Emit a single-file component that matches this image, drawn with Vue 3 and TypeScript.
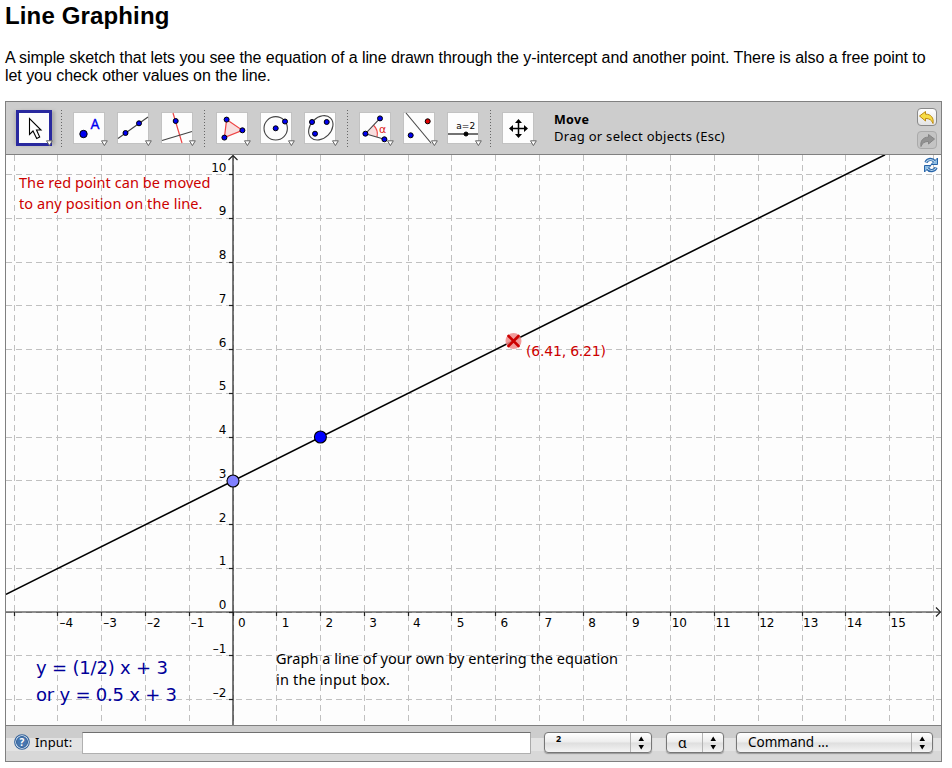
<script setup lang="ts">
interface Dot { x: number; y: number; r?: number; c?: string }
interface Tool { name: string; dots: Dot[]; selected?: boolean }

const groups: Tool[][] = [
  [{ name: 'move', dots: [], selected: true }],
  [
    { name: 'point', dots: [{ x: 10.5, y: 22, r: 3.7 }] },
    { name: 'line', dots: [{ x: 8.5, y: 21 }, { x: 22, y: 11.3 }] },
    { name: 'perpendicular', dots: [{ x: 14.7, y: 9 }] },
  ],
  [
    { name: 'polygon', dots: [{ x: 10.6, y: 7.6 }, { x: 26.4, y: 18.3 }, { x: 8.4, y: 25.6 }] },
    { name: 'circle', dots: [{ x: 15.7, y: 16.3 }, { x: 25, y: 9.5 }] },
    { name: 'ellipse', dots: [{ x: 8, y: 10 }, { x: 22.7, y: 10 }, { x: 11, y: 21.7 }] },
  ],
  [
    { name: 'angle', dots: [{ x: 6.4, y: 21.7 }, { x: 21, y: 6.4 }, { x: 25.4, y: 27.3 }] },
    { name: 'reflect', dots: [{ x: 7.7, y: 23.3 }, { x: 24.7, y: 9.3, c: '#e00000' }] },
    { name: 'slider', dots: [{ x: 19, y: 22, r: 2, c: '#000' }] },
  ],
  [{ name: 'pan', dots: [] }],
]

const ox = 233
const oy = 612.2
const unit = 43.77
const px = (v: number): number => ox + v * unit
const py = (v: number): number => oy - v * unit
const crisp = (v: number): number => Math.floor(v) + 0.5
const range = (a: number, b: number): number[] => Array.from({ length: b - a + 1 }, (_, i) => a + i)
const xs = range(-5, 16)
const ys = range(-2, 10)
const xLabels = range(-4, 15)
const label = (v: number): string => (v < 0 ? '–' + -v : String(v))
const labelX = (v: number): number => {
  if (v < 0) return px(v) + 1.5
  return v > 9 ? px(v) + 1 : px(v) + 5
}
</script>

<template>
  <main class="page">
    <h1>Line Graphing</h1>
    <p class="intro">
      <span class="l1">A simple sketch that lets you see the equation of a line drawn through the y-intercept and another point. There is also a free point to</span><br>
      <span class="l2">let you check other values on the line.</span>
    </p>

    <section class="applet">
      <header class="toolbar">
        <div v-for="(group, gi) in groups" :key="gi" class="group">
          <div v-for="tool in group" :key="tool.name" class="tool" :class="{ selected: tool.selected }">
            <svg class="icon" width="32" height="32" viewBox="0 0 32 32">
              <path v-if="tool.name === 'move'" d="M11.5 6.5V22.5L15 19L18.7 26.5L21.7 25L18.5 18H23Z" fill="#fff" stroke="#000" stroke-width="1.1" />
              <text v-if="tool.name === 'point'" x="17.6" y="17" class="letter">A</text>
              <path v-if="tool.name === 'line'" d="M1 26.5L31 5" class="ink" />
              <template v-if="tool.name === 'perpendicular'">
                <path d="M12 1L21 31" class="red" />
                <path d="M1 28.5L31 19.5" class="ink" />
              </template>
              <path v-if="tool.name === 'polygon'" d="M10.6 7.6L26.4 18.3L8.4 25.6Z" class="red tint" />
              <circle v-if="tool.name === 'circle'" cx="15.7" cy="16.3" r="11.7" class="ink" />
              <ellipse v-if="tool.name === 'ellipse'" cx="16.8" cy="15.8" rx="13.8" ry="10.3" transform="rotate(-45 16.8 15.8)" class="ink" />
              <template v-if="tool.name === 'angle'">
                <path d="M6.4 21.7L14.5 13.2A12 12 0 0 1 18 24.8Z" class="tint" />
                <path d="M14.5 13.2A12 12 0 0 1 18 24.8" class="red" />
                <path d="M21 6.4L6.4 21.7L25.4 27.3" class="ink" />
                <text x="20" y="20.5" class="alpha">α</text>
              </template>
              <path v-if="tool.name === 'reflect'" d="M3 1L28 31" class="ink" />
              <template v-if="tool.name === 'slider'">
                <path d="M1 22H31" stroke="#000" stroke-width="1.1" />
                <text x="9.2" y="17.2" textLength="19" class="tiny">a = 2</text>
              </template>
              <g v-if="tool.name === 'pan'">
                <path d="M16.5 9V24M9 16.5H24" stroke="#000" stroke-width="1.5" />
                <path d="M16.5 7L20 11H13ZM16.5 26L20 22H13ZM7 16.5L11 13V20ZM26 16.5L22 13V20Z" />
              </g>
              <circle v-for="(d, di) in tool.dots" :key="di" :cx="d.x" :cy="d.y" :r="d.r ?? 2.5" :fill="d.c ?? '#0000f0'" stroke="#000" stroke-width="1" />
              <path d="M28.5 28.8H34.3L31.4 33.6Z" fill="#fff" stroke="#666" stroke-width="1" />
            </svg>
          </div>
        </div>
        <div class="help">
          <strong>Move</strong>
          <span>Drag or select objects (Esc)</span>
        </div>
        <div class="history">
          <button class="hbtn">
            <svg width="18" height="17" viewBox="0 0 18 17"><path d="M1.5 7L7.5 2.5V5.2C13 5 16 9 15 14.5C13.7 11 11.5 9.5 7.5 9.4V12Z" fill="#f7dc45" stroke="#bd8a13" /></svg>
          </button>
          <button class="hbtn off">
            <svg width="18" height="17" viewBox="0 0 18 17"><path d="M16.5 7L10.5 2.5V5.2C5 5 2 9 3 14.5C4.3 11 6.5 9.5 10.5 9.4V12Z" fill="#929292" stroke="#858585" /></svg>
          </button>
        </div>
      </header>

      <svg class="graph" width="935" height="570" viewBox="6 155 935 570">
        <g class="grid">
          <line v-for="v in xs" :key="'x' + v" :x1="crisp(px(v))" :x2="crisp(px(v))" y1="155" y2="725" />
          <line v-for="v in ys" :key="'y' + v" x1="6" x2="941" :y1="crisp(py(v))" :y2="crisp(py(v))" />
        </g>
        <g class="axes">
          <path d="M6 612H940M233 725V156" />
          <path d="M228.5 160L233 155.5L237.5 160M936 607.5L940.5 612L936 616.5" fill="none" />
          <line v-for="v in xs.slice(0, -1)" :key="'tx' + v" :x1="crisp(px(v))" :x2="crisp(px(v))" y1="612" y2="616" />
          <line v-for="v in ys" :key="'ty' + v" x1="229" x2="233" :y1="crisp(py(v))" :y2="crisp(py(v))" />
        </g>
        <g class="nums">
          <text v-for="v in xLabels" :key="'lx' + v" :x="labelX(v)" y="627">{{ label(v) }}</text>
          <text v-for="v in ys" :key="'ly' + v" x="226.5" :y="py(v) - 3" text-anchor="end">{{ label(v) }}</text>
        </g>
        <path d="M6 594.4L885 154.8" stroke="#000" stroke-width="1.6" />
        <circle cx="233" cy="481" r="6" fill="#8080ff" stroke="#000" stroke-width="1.1" />
        <circle cx="320.4" cy="437" r="6" fill="#0000ff" stroke="#000" stroke-width="1.1" />
        <circle cx="513.5" cy="341" r="8" fill="#f08a8a" fill-opacity=".85" />
        <path d="M508.5 336L518.5 346M518.5 336L508.5 346" stroke="#cc0000" stroke-width="2.6" stroke-linecap="round" />
        <g class="words crimson">
          <text x="19" y="188" textLength="191.5">The red point can be moved</text>
          <text x="19" y="209" textLength="183.5">to any position on the line.</text>
          <text x="526" y="356" textLength="80" class="coord">(6.41, 6.21)</text>
        </g>
        <g class="words">
          <text x="276" y="664" textLength="342">Graph a line of your own by entering the equation</text>
          <text x="276" y="685" textLength="114">in the input box.</text>
        </g>
        <g class="formula">
          <text x="36" y="674" textLength="132">y = (1/2) x + 3</text>
          <text x="36" y="701" textLength="141">or y = 0.5 x + 3</text>
        </g>
        <g fill="none">
          <path d="M926 162.5C927.5 158.5 932.5 158.5 934.5 161.5M936 167.5C934.5 171.5 929.5 171.5 927.5 168.5" stroke="#2864a8" stroke-width="3.4" />
          <path d="M937.5 158V164.5H931ZM924.5 172V165.5H931Z" fill="#8dbce2" stroke="#2864a8" />
          <path d="M926 162C928 158.7 932.5 158.7 935 162M936 168C934 171.3 929.5 171.3 927 168" stroke="#b9d9f0" stroke-width="1.2" />
        </g>
      </svg>

      <footer class="inputbar">
        <svg class="question" width="16" height="16" viewBox="0 0 16 16">
          <circle cx="8" cy="8" r="7.3" fill="#e8f1fa" stroke="#2f5f99" stroke-width="1.1" />
          <circle cx="8" cy="8" r="5.5" fill="#4777b0" stroke="#2f5f99" />
          <text x="8" y="11.8" text-anchor="middle" class="qmark">?</text>
        </svg>
        <label class="caption">Input:</label>
        <input class="field" type="text">
        <div class="select power"><span>2</span><i><svg width="20" height="20"><path d="M7.5 8L10.2 3.5L13 8ZM7.5 12L10.2 16.5L13 12Z" /></svg></i></div>
        <div class="select greek"><span>α</span><i><svg width="20" height="20"><path d="M7.5 8L10.2 3.5L13 8ZM7.5 12L10.2 16.5L13 12Z" /></svg></i></div>
        <div class="select command"><span>Command ...</span><i><svg width="20" height="20"><path d="M7.5 8L10.2 3.5L13 8ZM7.5 12L10.2 16.5L13 12Z" /></svg></i></div>
      </footer>
    </section>
  </main>
</template>

<style>
body { background: #fff; }
</style>

<style scoped>
.page { box-sizing: border-box; width: 952px; height: 768px; padding: 2px 5px 0; overflow: hidden; color: #000; font-family: "Liberation Sans", Arial, sans-serif; }
h1 { margin: 0; font-size: 24px; line-height: 28px; letter-spacing: .14px; }
.intro { margin: 19px 0 0; font-size: 16px; line-height: 18px; white-space: nowrap; }
.l1 { letter-spacing: -.064px; }
.l2 { letter-spacing: -.05px; }
.applet { box-sizing: border-box; width: 937px; height: 661px; margin-top: 16px; border: 1px solid #808080; font-family: "Noto Sans", sans-serif; }
.toolbar { box-sizing: border-box; display: flex; height: 53px; padding: 7px 4px 0 12px; background: #cdcdcd; border-bottom: 1px solid #808080; }
.group { box-sizing: border-box; display: flex; gap: 12px; height: 40px; padding-top: 3px; }
.group + .group { margin-left: 11px; padding-left: 12px; background: radial-gradient(circle, #666 .7px, transparent .9px) -1px 0 / 3px 3px repeat-y; }
.tool { box-sizing: border-box; width: 32px; height: 32px; background: #fdfdfd; box-shadow: inset 0 0 0 1px #c2c2c2; }
.tool.selected { box-shadow: 0 0 0 2px #29299f, inset 0 0 0 1px #29299f, 4px 0 3px 1px #aaa, -3px 0 3px 1px #b5b5b5; }
.icon { display: block; overflow: visible; }
.ink { fill: none; stroke: #444; stroke-width: 1.1; }
.red { fill: none; stroke: #e44; stroke-width: 1.2; }
.tint { fill: #f8dede; }
.letter { font: 14px "Noto Sans", sans-serif; fill: #0000f0; stroke: #0000f0; stroke-width: .3px; }
.alpha { font: 11px "DejaVu Sans", sans-serif; fill: #d22; }
.tiny { font: 9px "DejaVu Sans", sans-serif; }
.help { display: flex; flex-direction: column; margin: 3px 0 0 20px; font-size: 13px; line-height: 16px; white-space: nowrap; }
.help strong { font-size: 12.5px; letter-spacing: .3px; }
.help span { letter-spacing: .28px; }
.history { display: flex; flex-direction: column; gap: 5px; margin: -1px 0 0 auto; }
.hbtn { box-sizing: border-box; width: 20px; height: 18px; padding: 0; border: 1px solid #898989; border-radius: 4px; background: linear-gradient(#fff, #e4e4e4); }
.hbtn svg { display: block; }
.hbtn.off { border-color: #aaa; background: #c4c4c4; }
.graph { display: block; background: #fdfdfd; }
.grid line { stroke: #c0c0c0; stroke-width: 1; stroke-dasharray: 6 4; }
.axes { stroke: #222; stroke-width: 1.2; }
.nums { font: 12px "DejaVu Sans", sans-serif; }
.words { font: 14.5px "Noto Sans", sans-serif; }
.crimson { fill: #cc0000; }
.words .coord { font: 14px "DejaVu Sans", sans-serif; }
.formula { font: 18px "DejaVu Sans", sans-serif; fill: #000099; }
.inputbar { box-sizing: border-box; display: flex; align-items: flex-start; height: 36px; padding: 6px 8px 0; border-top: 1px solid #808080; background: linear-gradient(#cdcdcd 0 12px, #e3e3e3 12px 25px, #d8d8d8 25px); }
.question { margin-top: 2px; }
.qmark { font: bold 10px "Noto Sans", sans-serif; fill: #fff; }
.caption { width: 47px; margin-left: 5px; font-size: 13px; line-height: 20px; letter-spacing: .1px; }
.field { box-sizing: border-box; width: 449px; height: 22px; padding: 0 4px; border: 1px solid #b0b0b0; border-top: 1px solid #707070; border-right-color: #aaa; background: #fff; }
.select { box-sizing: border-box; display: flex; justify-content: space-between; height: 21px; border: 1px solid #777; border-radius: 4px; background: linear-gradient(#fff, #ededed 48%, #dedede 52%, #f4f4f4); font-size: 13.5px; line-height: 19px; box-shadow: 0 1px 1px #999; }
.select i { width: 20px; height: 19px; border-left: 1px solid #b4b4b4; }
.select svg { display: block; }
.power { width: 108px; margin-left: 13px; }
.power span { padding-left: 11px; font-size: 9px; font-weight: bold; line-height: 11px; }
.greek { width: 58px; margin-left: 14px; }
.greek span { padding-left: 11px; font-size: 14px; line-height: 19px; }
.command { width: 197px; margin-left: 12px; }
.command span { padding-left: 11px; }
</style>
